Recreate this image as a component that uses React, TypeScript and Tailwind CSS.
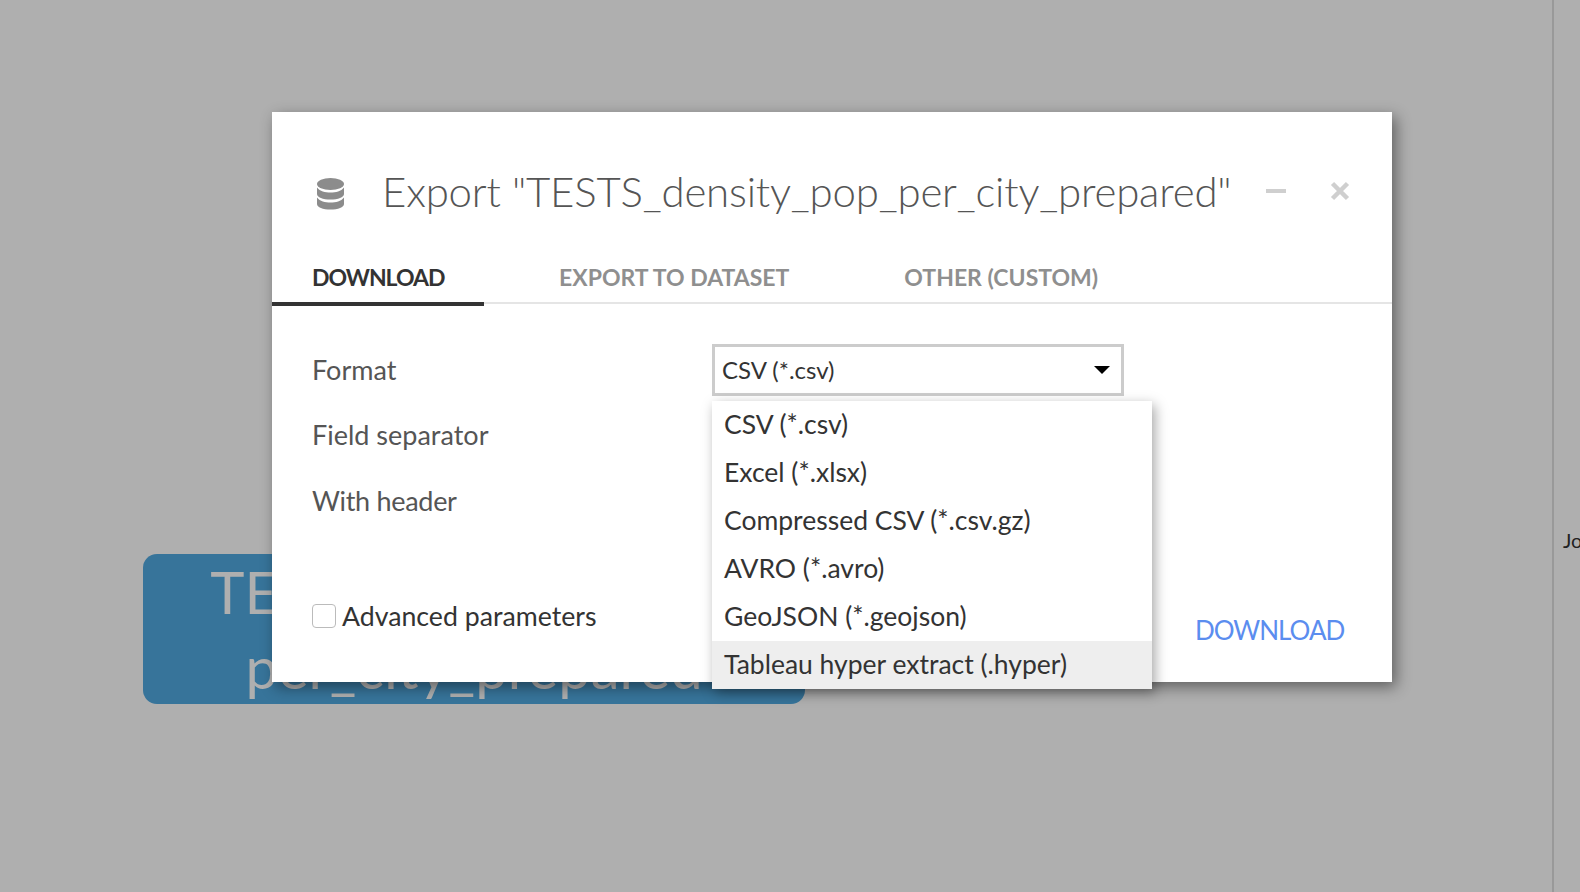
import React from "react";

const formats = [
  "CSV (*.csv)",
  "Excel (*.xlsx)",
  "Compressed CSV (*.csv.gz)",
  "AVRO (*.avro)",
  "GeoJSON (*.geojson)",
  "Tableau hyper extract (.hyper)",
];

const DatabaseIcon = () => (
  <svg width="27" height="32" viewBox="0 0 27 32" className="mt-[7px] shrink-0">
    <ellipse cx="13.5" cy="6" rx="13.5" ry="6" fill="#8c8c8c" />
    <path d="M0 9.5C3 13.5 8 14.5 13.5 14.5S24 13.5 27 9.5V16C27 19.5 21 21.5 13.5 21.5S0 19.5 0 16Z" fill="#8c8c8c" />
    <path d="M0 19.5C3 23.5 8 24.5 13.5 24.5S24 23.5 27 19.5V26C27 29.5 21 31.5 13.5 31.5S0 29.5 0 26Z" fill="#8c8c8c" />
  </svg>
);

export default function App() {
  return (
    <div className="relative h-[892px] w-[1580px] overflow-hidden bg-[#afafaf] font-['Lato','Noto_Sans',sans-serif]">
      {/* flow node behind the modal */}
      <div className="absolute left-[143px] top-[554px] flex h-[150px] w-[662px] flex-col items-center overflow-hidden rounded-[14px] bg-[#37749a] text-center text-[58px] leading-[75px] font-normal whitespace-nowrap text-[#afafaf]">
        <div>TESTS_density_pop_</div>
        <div>per_city_prepared</div>
      </div>

      {/* right side panel */}
      <div className="absolute top-0 right-0 h-full w-[28px] overflow-hidden border-l-2 border-[#999999] pt-[525px] pl-[9px] text-[20px] whitespace-nowrap text-[#222222]">
        Jo
      </div>

      {/* modal */}
      <div className="absolute left-[272px] top-[112px] h-[570px] w-[1120px] bg-white shadow-[4px_5px_14px_rgba(0,0,0,0.45)]">
        <div className="flex h-[112px] items-center pt-[45px] pl-[45px]">
          <DatabaseIcon />
          <h1 className="ml-[38px] text-[42px] leading-[48px] font-light tracking-[-0.2px] whitespace-nowrap text-[#555555]">
            Export "TESTS_density_pop_per_city_prepared"
          </h1>
          <div className="ml-[35px] h-[4px] w-[20px] bg-[#cfcfcf]" />
          <svg width="20" height="20" viewBox="0 0 20 20" className="ml-[44px]">
            <path d="M2.5 2.5L17.5 17.5M17.5 2.5L2.5 17.5" stroke="#cfcfcf" strokeWidth="4.5" />
          </svg>
        </div>

        <div className="flex h-[80px] border-b-2 border-[#e5e5e5] text-[23px] font-bold">
          <div className="h-[82px] w-[212px] border-b-4 border-[#333333] pt-[36px] pl-[40px] tracking-[-1px] text-[#333333]">DOWNLOAD</div>
          <div className="pt-[36px] pl-[75px] text-[#8f8f8f]">EXPORT TO DATASET</div>
          <div className="pt-[36px] pl-[115px] text-[#8f8f8f]">OTHER (CUSTOM)</div>
        </div>

        <div className="relative pt-[40px] pl-[40px] text-[27px] text-[#555555]">
          <div className="flex h-[52px] items-center">
            <span className="w-[400px]">Format</span>
            <div className="relative">
              <div className="flex h-[52px] w-[412px] items-center justify-between border-[3px] border-[#cccccc] pr-[11px] pl-[7px] text-[24px] text-[#333333]">
                CSV (*.csv)
                <div className="h-0 w-0 border-x-[8px] border-t-[8px] border-x-transparent border-t-black" />
              </div>
              <ul className="absolute top-[57px] left-0 z-10 w-[440px] bg-white text-[26.5px] text-[#333333] shadow-[3px_4px_12px_rgba(0,0,0,0.35)]">
                {formats.map((f, i) => (
                  <li key={f} className={`flex h-[48px] items-center pl-[12px] ${i === 5 ? "bg-[#eeeeee]" : ""}`}>
                    {f}
                  </li>
                ))}
              </ul>
            </div>
          </div>
          <div className="mt-[13px] flex h-[52px] items-center">Field separator</div>
          <div className="mt-[14px] flex h-[52px] items-center tracking-[-0.3px]">With header</div>
          <div className="mt-[69px] flex items-center gap-[6px] text-[26.7px] text-[#333333]">
            <span className="h-[24px] w-[24px] rounded-[4px] border border-[#bbbbbb] bg-white" />
            Advanced parameters
          </div>
          <div className="absolute top-[307px] left-[923px] text-[26px] tracking-[-1px] text-[#5b8def]">DOWNLOAD</div>
        </div>
      </div>
    </div>
  );
}
